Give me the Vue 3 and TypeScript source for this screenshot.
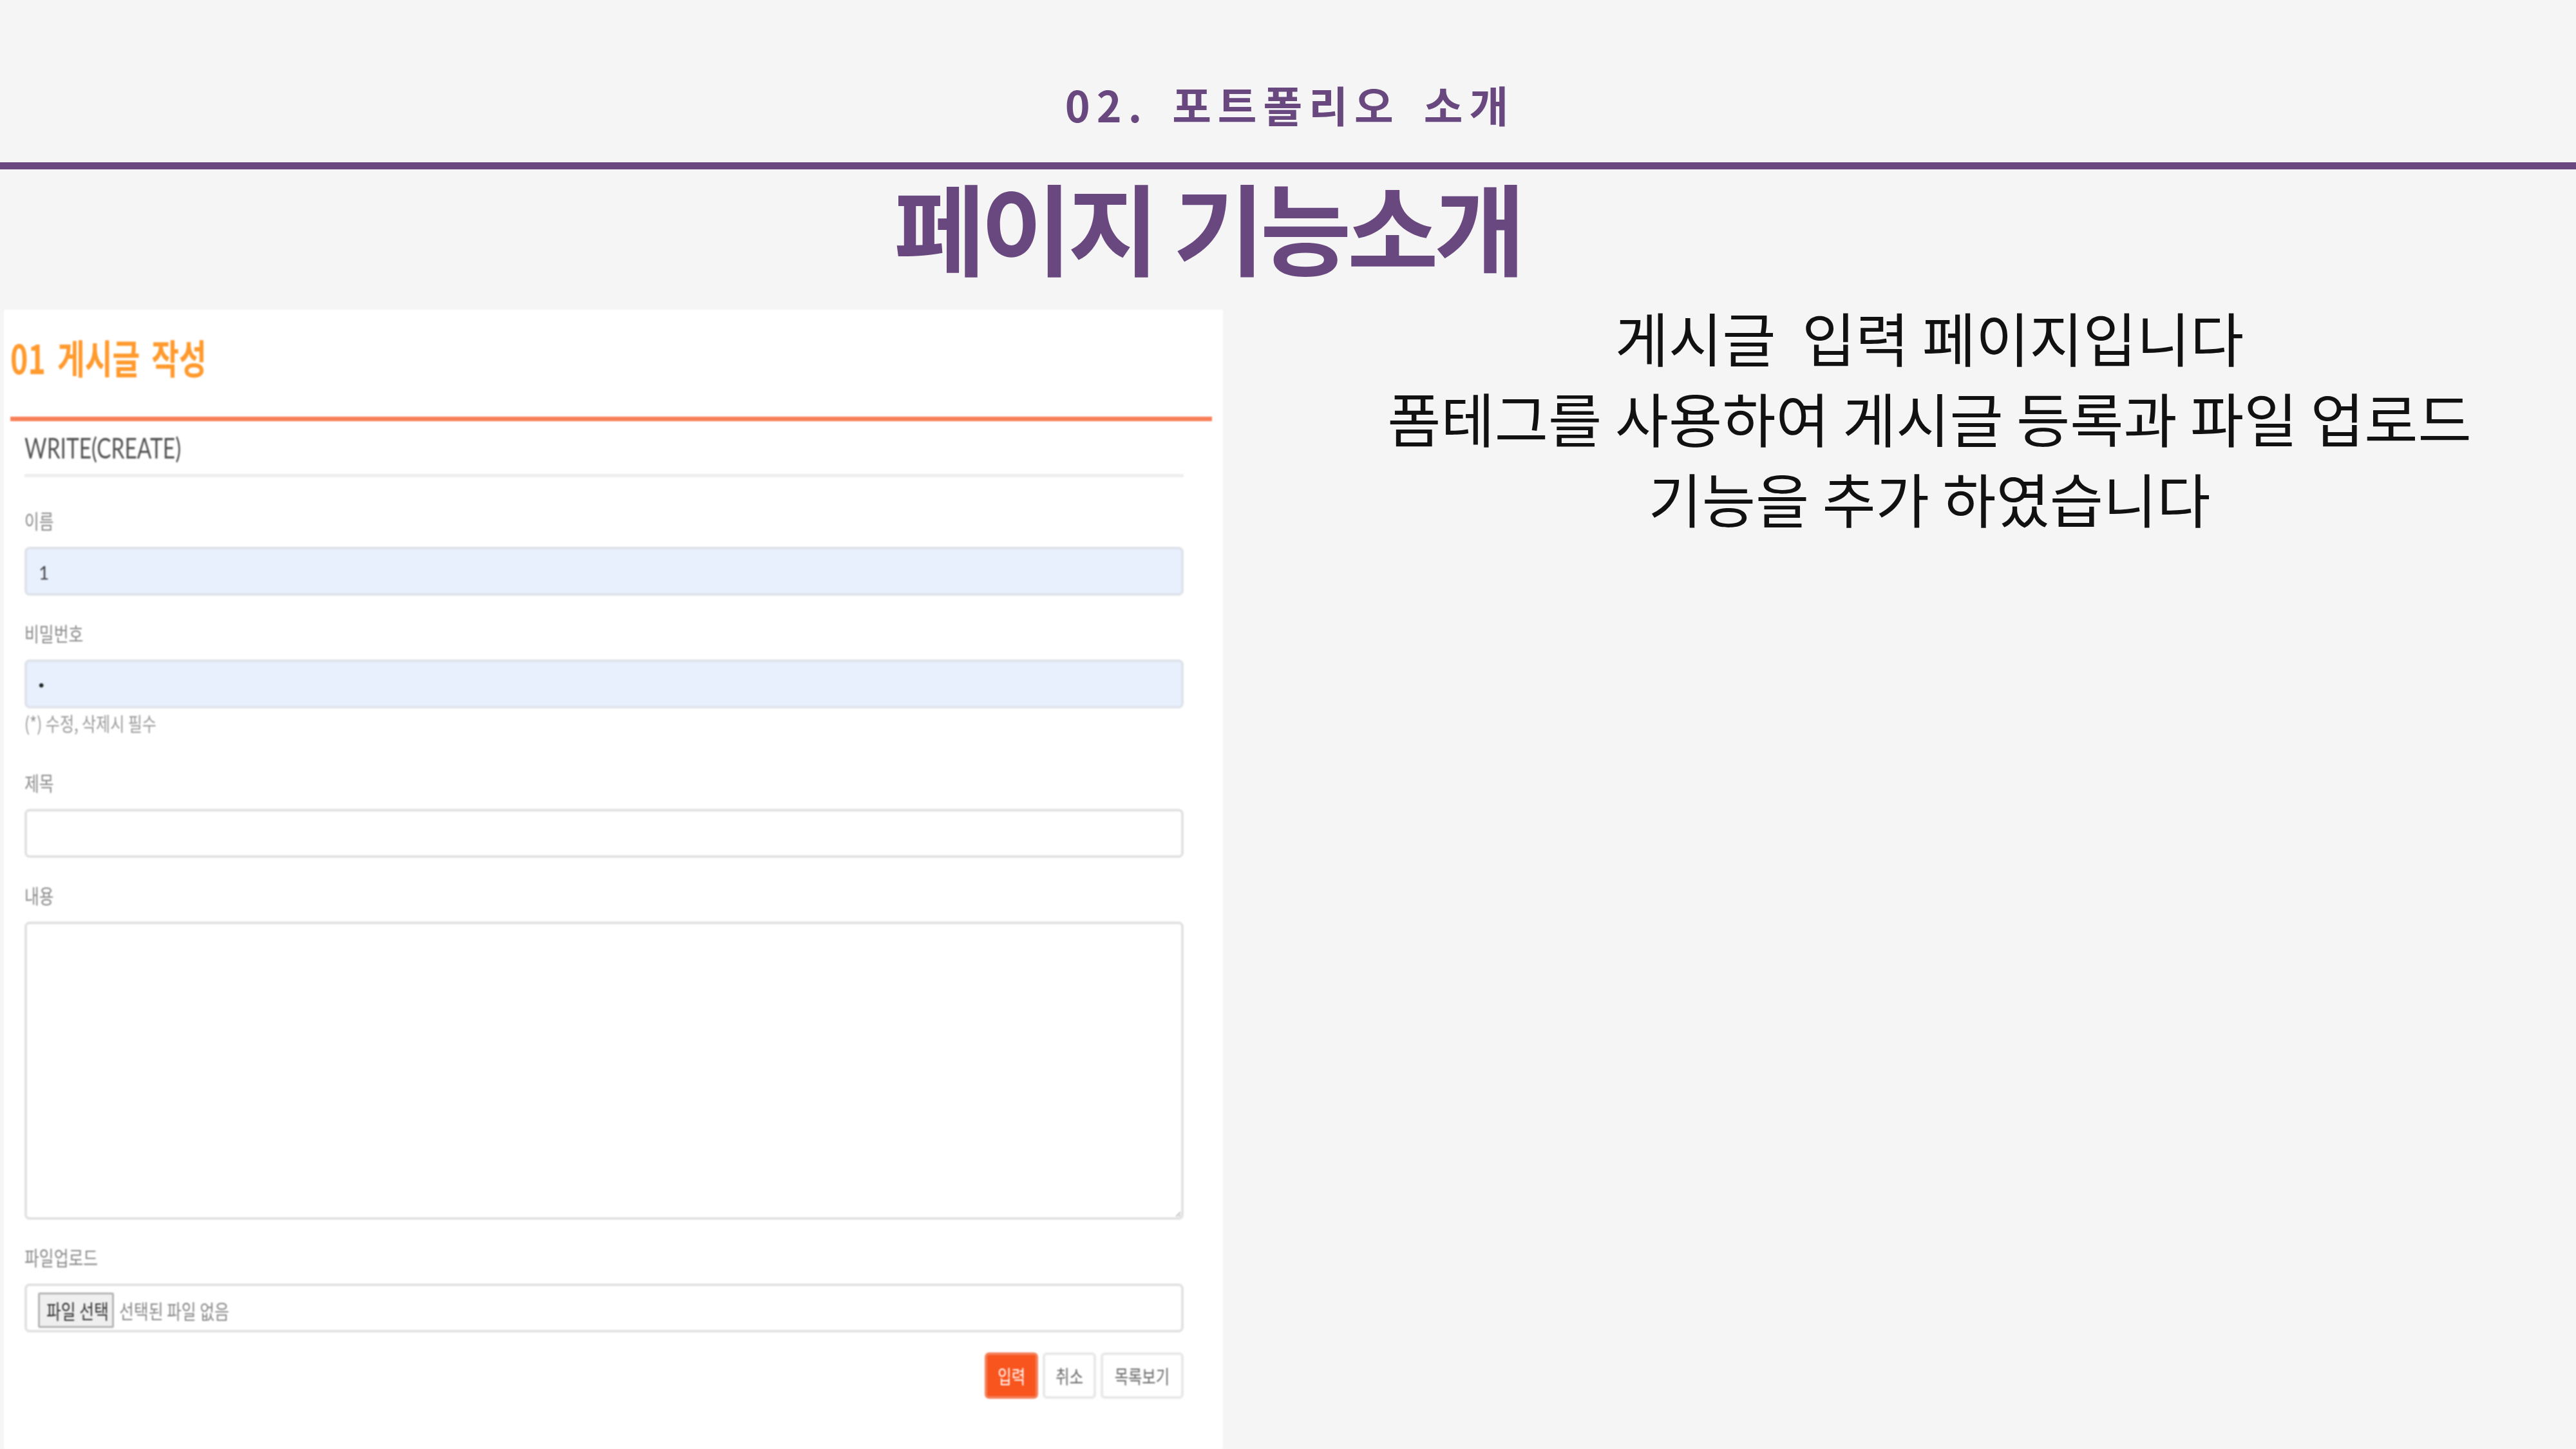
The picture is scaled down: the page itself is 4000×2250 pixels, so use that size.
<script setup lang="ts">
const descLines: string[] = [
  '게시글  입력 페이지입니다',
  '폼테그를 사용하여 게시글 등록과 파일 업로드',
  '기능을 추가 하였습니다',
]
</script>

<template>
  <div class="page">
    <header class="top">
      <div class="section">02. 포트폴리오 소개</div>
    </header>
    <h1 class="title">페이지 기능소개</h1>
    <main class="content">
      <section class="panel">
        <h2 class="panel-title"><span class="narrow heading">01 게시글 작성</span></h2>
        <form class="form" @submit.prevent>
          <h3 class="form-head"><span class="narrow head-text">WRITE(CREATE)</span></h3>
          <div class="field first">
            <label class="label"><span class="narrow">이름</span></label>
            <input class="control filled" type="text" value="1" />
          </div>
          <div class="field">
            <label class="label"><span class="narrow">비밀번호</span></label>
            <input class="control filled secret" type="password" value="1" />
            <p class="help"><span class="narrow">(*) 수정, 삭제시 필수</span></p>
          </div>
          <div class="field">
            <label class="label"><span class="narrow">제목</span></label>
            <input class="control" type="text" />
          </div>
          <div class="field">
            <label class="label"><span class="narrow">내용</span></label>
            <textarea class="control area"></textarea>
          </div>
          <div class="field">
            <label class="label"><span class="narrow">파일업로드</span></label>
            <div class="control file">
              <button class="file-btn" type="button"><span class="narrow">파일 선택</span></button>
              <span class="file-name narrow">선택된 파일 없음</span>
            </div>
          </div>
          <div class="actions">
            <button class="btn primary" type="submit"><span class="narrow">입력</span></button>
            <button class="btn" type="button"><span class="narrow">취소</span></button>
            <button class="btn wide" type="button"><span class="narrow">목록보기</span></button>
          </div>
        </form>
      </section>
      <aside class="desc">
        <p v-for="line in descLines" :key="line" class="desc-line">{{ line }}</p>
      </aside>
    </main>
  </div>
</template>

<style>
html, body { margin: 0; background: #f5f5f5; }
</style>

<style scoped>
* { box-sizing: border-box; }
.page {
  width: 4000px;
  height: 2250px;
  overflow: hidden;
  background: #f5f5f5;
  font-family: "Noto Sans CJK KR", "Noto Sans", sans-serif;
  display: flex;
  flex-direction: column;
}
.top {
  height: 263px;
  border-bottom: 11px solid #69477f;
  display: flex;
  justify-content: center;
  padding: 115px 0 0 6px;
}
.section {
  font-size: 66px;
  line-height: 92px;
  font-weight: 700;
  letter-spacing: 10px;
  word-spacing: 12px;
  color: #69477f;
  white-space: pre;
}
.title {
  margin: 0;
  height: 198px;
  padding-right: 250px;
  text-align: center;
  font-size: 154px;
  line-height: 174px;
  font-weight: 700;
  letter-spacing: -6.5px;
  color: #69477f;
}
.content {
  flex: 1;
  display: flex;
  min-height: 0;
}
.panel {
  width: 1893px;
  margin: 20px 0 0 6px;
  background: #fff;
  padding: 30px 17px 0 10px;
  filter: blur(0.9px);
}
.panel-title {
  margin: 0;
  height: 143px;
  border-bottom: 7px solid #f97f58;
  font-size: 62px;
  line-height: 86px;
  font-weight: 700;
  color: #ff9a2e;
}
.form { padding: 0 44px 0 22px; }
.narrow {
  display: inline-block;
  transform: scaleX(0.8);
  transform-origin: left center;
  white-space: nowrap;
}
.heading { transform: scaleX(0.75); word-spacing: 10px; }
.head-text { transform: scaleX(0.76); }
.form-head {
  margin: 0;
  height: 87px;
  border-bottom: 5px solid #eeeeee;
  font-family: Lato, "Noto Sans CJK KR", sans-serif;
  font-size: 44px;
  line-height: 82px;
  font-weight: 400;
  color: #555;
}
.field { margin-top: 38px; display: flex; flex-direction: column; }
.field.first { margin-top: 47px; }
.label {
  height: 61px;
  font-size: 31px;
  line-height: 40px;
  color: #8a8a8a;
}
.control {
  display: block;
  width: 100%;
  height: 76px;
  border: 4px solid #e2e2e2;
  border-radius: 8px;
  background: #fff;
  padding: 3px 18px 0;
  font-family: Lato, "Liberation Sans", sans-serif;
  font-size: 28px;
  color: #444;
  outline: none;
}
.filled { background: #e8f0fe; border-color: #dfe3ea; }
.secret { font-size: 18px; padding-left: 17px; padding-top: 2px; color: #222; }
.area { height: 463px; resize: vertical; }
.help {
  margin: 2px 0 0;
  height: 55px;
  font-size: 30px;
  line-height: 40px;
  color: #999;
}
.file {
  display: flex;
  align-items: center;
  gap: 8px;
  padding: 6px 17px 0;
}
.file-btn {
  width: 118px;
  height: 55px;
  padding: 0 0 0 10px;
  text-align: left;
  border: 3px solid #b5b5b5;
  border-radius: 3px;
  background: #efefef;
  font-family: "Noto Sans CJK KR", sans-serif;
  font-size: 31px;
  line-height: 45px;
  color: #333;
}
.file-name {
  font-family: "Noto Sans CJK KR", sans-serif;
  font-size: 31px;
  color: #888;
}
.actions {
  margin-top: 31px;
  display: flex;
  justify-content: flex-end;
  gap: 7px;
}
.btn {
  width: 83px;
  height: 72px;
  padding: 0;
  border: 4px solid #e8e8e8;
  border-radius: 7px;
  background: #fff;
  font-family: "Noto Sans CJK KR", sans-serif;
  font-size: 29px;
  color: #666;
  text-align: center;
}
.btn .narrow { transform-origin: center center; }
.btn.wide { width: 129px; }
.btn.primary { background: #f8541d; border-color: #f4805a; color: #fff; }
.desc {
  flex: 1;
  margin-left: 93px;
  display: flex;
  flex-direction: column;
  align-items: center;
}
.desc-line {
  margin: 0;
  height: 125px;
  font-size: 90.5px;
  line-height: 123px;
  color: #111;
  white-space: pre;
}
</style>
